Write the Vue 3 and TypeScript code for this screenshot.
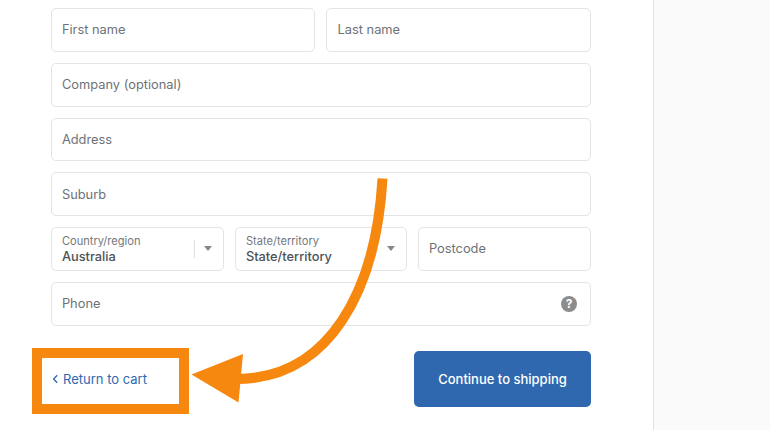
<script setup lang="ts">
const fullFields: string[] = ['Company (optional)', 'Address', 'Suburb']
</script>

<template>
  <div class="page">
    <main class="main">
      <form class="form" @submit.prevent>
        <div class="row two">
          <div class="field">First name</div>
          <div class="field">Last name</div>
        </div>
        <div v-for="f in fullFields" :key="f" class="field">{{ f }}</div>
        <div class="row three">
          <div class="field select">
            <div class="sel-text">
              <span class="sel-label">Country/region</span>
              <span class="sel-value">Australia</span>
            </div>
            <span class="divider"></span>
            <span class="caret"></span>
          </div>
          <div class="field select">
            <div class="sel-text">
              <span class="sel-label">State/territory</span>
              <span class="sel-value">State/territory</span>
            </div>
            <span class="caret"></span>
          </div>
          <div class="field">Postcode</div>
        </div>
        <div class="field phone">
          <span>Phone</span>
          <span class="help">?</span>
        </div>
        <div class="actions">
          <a class="back">
            <svg width="7" height="10" viewBox="0 0 7 10" fill="none">
              <path d="M5.2 1.2 1.6 5l3.6 3.8" stroke="#2f68ae" stroke-width="1.3" />
            </svg>
            Return to cart
          </a>
          <button class="continue" type="button">Continue to shipping</button>
        </div>
      </form>
    </main>
    <aside class="side"></aside>

    <div class="highlight"></div>
    <svg class="arrow" width="770" height="430" viewBox="0 0 770 430" fill="none">
      <path d="M382.5 178.5C376 290 330 379 236 379" stroke="#f6870f" stroke-width="10" />
      <path d="M191.5 374.5 243 354 238.5 402.5Z" fill="#f6870f" />
    </svg>
  </div>
</template>

<style>
html, body { margin: 0; background: #fff; }
</style>

<style scoped>
.page {
  position: relative;
  display: flex;
  width: 770px;
  height: 430px;
  overflow: hidden;
  font-family: Inter, "Liberation Sans", sans-serif;
  font-size: 12.85px;
  color: #6d7278;
  background: #fff;
}
.main {
  width: 653px;
  flex: none;
  box-sizing: border-box;
  padding: 8px 0 0 51px;
}
.side {
  flex: 1;
  background: #fafafa;
  border-left: 1px solid #e3e3e3;
}
.form {
  width: 540px;
  display: flex;
  flex-direction: column;
  gap: 11px;
}
.row { display: grid; gap: 11px; }
.two { grid-template-columns: 264px 265px; }
.three { grid-template-columns: 173px 172px 173px; }
.field {
  box-sizing: border-box;
  height: 43.8px;
  padding: 0 10px 0.5px 9.9px;
  display: flex;
  align-items: center;
  background: #fff;
  border: 1.5px solid #e4e4e4;
  border-radius: 5px;
  white-space: nowrap;
}
.two .field + .field { padding-left: 10.5px; }
.select { padding-right: 11px; }
.sel-text {
  flex: 1;
  display: flex;
  flex-direction: column;
  gap: 0;
  padding-top: 2px;
}
.sel-label { font-size: 11.1px; line-height: 14px; color: #73777c; }
.sel-value { font-size: 12.8px; line-height: 16px; margin-top: 1px; color: #4d5257; font-weight: 500; }
.divider {
  width: 1px;
  height: 18px;
  background: #dedede;
  margin-right: 9px;
}
.caret {
  width: 0;
  height: 0;
  border-left: 4.5px solid transparent;
  border-right: 4.5px solid transparent;
  border-top: 5px solid #85888c;
}
.phone { justify-content: space-between; padding-right: 13px; }
.help {
  width: 16px;
  height: 16px;
  border-radius: 50%;
  background: #8c8c8c;
  color: #fff;
  font-size: 12px;
  font-weight: 700;
  line-height: 16px;
  text-align: center;
}
.actions {
  display: flex;
  justify-content: space-between;
  align-items: center;
  margin-top: 14px;
}
.back {
  display: flex;
  align-items: center;
  gap: 4px;
  margin-left: 1px;
  color: #2f68ae;
  font-size: 13px;
}
.continue {
  width: 177px;
  height: 56px;
  border: 0;
  border-radius: 5px;
  background: #2f68ae;
  color: #fff;
  font: 500 13px Inter, "Liberation Sans", sans-serif;
}
.highlight {
  position: absolute;
  left: 32px;
  top: 348px;
  width: 137px;
  height: 46px;
  border: 10px solid #f6870f;
}
.arrow {
  position: absolute;
  left: 0;
  top: 0;
  pointer-events: none;
}
</style>
